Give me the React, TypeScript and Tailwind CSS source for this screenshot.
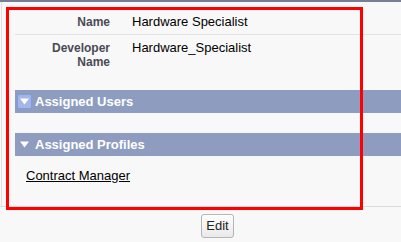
import { useState } from "react";

function Caret({ focused }: { focused?: boolean }) {
  return (
    <span
      className={`w-[15px] h-[15px] flex items-center justify-center ml-[2px] mr-[3px] ${
        focused ? "bg-[#a4b6e6] border border-[#7c9be0] rounded-[2px]" : "border border-transparent"
      }`}
    >
      <svg width="9" height="7" viewBox="0 0 9 7">
        <path d="M0 0.5 L9 0.5 L4.5 6.5 Z" fill="#ffffff" />
      </svg>
    </span>
  );
}

function SectionHeader({ title, focused }: { title: string; focused?: boolean }) {
  return (
    <div className="ml-[13px] h-[23px] bg-[#8e9dbf] flex items-center">
      <Caret focused={focused} />
      <span className="text-[13px] font-bold text-white leading-none">{title}</span>
    </div>
  );
}

export default function App() {
  const [open] = useState(true);

  return (
    <div
      className="relative w-[401px] h-[242px] overflow-hidden bg-[#f8f8f8]"
      style={{ fontFamily: '"Liberation Sans", Arial, sans-serif' }}
    >
      <div className="h-[2px] bg-[#767f95]" />

      <div className="ml-[1px] border-l border-[#e0e0e0]">
        {/* detail rows */}
        <div className="ml-[13px] flex border-b border-[#e3e3e3] pt-[13px] pb-[5px]">
          <div className="w-[95px] text-right text-[12px] font-bold leading-[14px] text-[#4a4a56]">
            Name
          </div>
          <div className="pl-[22px] text-[13px] leading-[14px] text-black">Hardware Specialist</div>
        </div>
        <div className="ml-[13px] flex pt-[6px] pb-[21px]">
          <div className="w-[95px] text-right text-[12px] font-bold leading-[14px] text-[#4a4a56]">
            Developer
            <br />
            Name
          </div>
          <div className="pl-[22px] text-[13px] leading-[14px] text-black">Hardware_Specialist</div>
        </div>

        <SectionHeader title="Assigned Users" focused />
        <div className="h-[20px]" />
        <SectionHeader title="Assigned Profiles" />
        {open && (
          <div className="pl-[24px] pt-[7px] h-[50px]">
            <a href="#" className="text-[13px] leading-[16px] text-black underline">
              Contract Manager
            </a>
          </div>
        )}
      </div>
      <div className="border-t border-[#dcdcdc] flex justify-center pt-[7px]">
        <button className="ml-[34px] h-[24px] px-[4px] border border-[#b5b5b5] rounded-[3px] bg-gradient-to-b from-white to-[#e9e9e9] text-[13px] text-[#222]">
          Edit
        </button>
      </div>

      {/* red annotation box */}
      <div className="absolute left-[6px] top-[7px] w-[357px] h-[203px] border-[3px] border-[#ff0000] pointer-events-none" />
    </div>
  );
}
